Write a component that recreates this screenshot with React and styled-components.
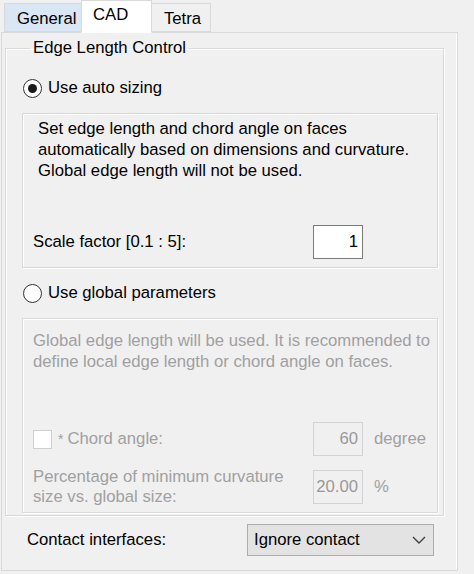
import styled, { createGlobalStyle } from 'styled-components';

const GlobalStyle = createGlobalStyle`
  html, body {
    margin: 0;
    padding: 0;
    background: #f0f0f0;
  }
  body {
    font-family: "Liberation Sans", Arial, sans-serif;
  }
`;

const Window = styled.div`
  width: 474px;
  height: 574px;
  background: #f0f0f0;
  color: #000;
  font-size: 16.7px;
  display: flex;
  flex-direction: column;
  overflow: hidden;
`;

const TabStrip = styled.div`
  display: flex;
  align-items: flex-end;
  height: 32px;
  padding-left: 5px;
  position: relative;
  z-index: 1;
`;

const Tab = styled.div`
  box-sizing: border-box;
  width: ${(p) => p.$width}px;
  height: ${(p) => (p.$active ? 33 : 29)}px;
  margin-bottom: ${(p) => (p.$active ? -1 : 0)}px;
  margin-left: -1px;
  padding: ${(p) => (p.$active ? '0 0 3px 11px' : '2px 0 0 12px')};
  display: flex;
  align-items: center;
  border: 1px solid #d9d9d9;
  border-bottom-color: ${(p) => (p.$active ? '#fff' : '#d9d9d9')};
  background: ${(p) => (p.$active ? '#fff' : p.$hover ? '#d9e6f3' : '#f0f0f0')};
  white-space: nowrap;
`;

const Pane = styled.div`
  box-sizing: border-box;
  height: 539px;
  margin: 0 16px 0 1px;
  padding: 5px 13px 0 3px;
  border: 1px solid #d9d9d9;
  box-shadow: inset -1px 0 0 #fff;
  display: flex;
  flex-direction: column;
`;

const Group = styled.fieldset`
  margin: 0;
  min-width: 0;
  padding: 18px 5px 2px 16px;
  border: 1px solid #d9d9d9;
  box-shadow: inset 1px 1px 0 #fff, 1px 1px 0 #fff;
  display: flex;
  flex-direction: column;
  gap: 13px;
`;

const Legend = styled.legend`
  margin-left: 8px;
  padding: 0 3px;
  line-height: 20px;
`;

const RadioRow = styled.label`
  display: flex;
  align-items: center;
  gap: 6px;
  height: 24px;
  padding-left: 1px;
`;

const Radio = styled.span`
  box-sizing: border-box;
  width: 19px;
  height: 19px;
  border: 1px solid #333;
  border-radius: 50%;
  background: #fff;
  display: flex;
  align-items: center;
  justify-content: center;

  &::after {
    content: "";
    display: ${(p) => (p.$checked ? 'block' : 'none')};
    width: 9px;
    height: 9px;
    border-radius: 50%;
    background: #1a1a1a;
  }
`;

const Panel = styled.div`
  box-sizing: border-box;
  height: ${(p) => p.$height}px;
  padding: ${(p) => p.$padding};
  border: 1px solid #d9d9d9;
  box-shadow: inset 1px 1px 0 #fff, 1px 1px 0 #fff;
  display: flex;
  flex-direction: column;
  color: ${(p) => (p.$disabled ? '#a0a0a0' : '#000')};
`;

const Note = styled.p`
  margin: 0;
  padding-left: ${(p) => p.$indent || 0}px;
  line-height: 21px;
`;

const FieldRow = styled.div`
  display: grid;
  grid-template-columns: 269px 50px auto;
  column-gap: 11px;
  align-items: center;
  margin-top: ${(p) => (p.$first ? 'auto' : '11px')};
  line-height: 20px;
`;

const NumBox = styled.div`
  box-sizing: border-box;
  height: 34px;
  padding-right: 4px;
  display: flex;
  align-items: center;
  justify-content: flex-end;
  background: ${(p) => (p.$disabled ? '#f0f0f0' : '#fff')};
  border: 1px solid ${(p) => (p.$disabled ? '#d2d2d2' : '#7a7a7a')};
  color: ${(p) => (p.$disabled ? '#999' : '#000')};
`;

const CheckLabel = styled.div`
  display: flex;
  align-items: center;
`;

const Check = styled.span`
  box-sizing: border-box;
  width: 19px;
  height: 19px;
  margin-right: 6px;
  background: #fff;
  border: 1px solid #cfcfcf;
`;

const Star = styled.span`
  font-size: 14px;
  align-self: flex-start;
  margin: 0 4px 0 0;
`;

const ContactRow = styled.div`
  display: grid;
  grid-template-columns: 220px 187px;
  align-items: center;
  margin-top: 8px;
  padding-left: 22px;
`;

const Select = styled.div`
  box-sizing: border-box;
  height: 32px;
  padding: 0 7px 0 6px;
  display: flex;
  align-items: center;
  justify-content: space-between;
  background: #e3e3e3;
  border: 1px solid #adadad;
`;

const Chevron = () => (
  <svg width="14" height="8" viewBox="0 0 14 8">
    <polyline points="1,1 7,7 13,1" fill="none" stroke="#404040" strokeWidth="1.4" />
  </svg>
);

export default function App() {
  return (
    <>
      <GlobalStyle />
      <Window>
        <TabStrip>
          <Tab $width={78} $hover>General</Tab>
          <Tab $width={71} $active>CAD</Tab>
          <Tab $width={60}>Tetra</Tab>
        </TabStrip>
        <Pane>
          <Group>
            <Legend>Edge Length Control</Legend>
            <RadioRow>
              <Radio $checked />
              Use auto sizing
            </RadioRow>
            <Panel $height={155} $padding="4px 0 8px 10px">
              <Note $indent={5}>
                Set edge length and chord angle on faces
                <br />
                automatically based on dimensions and curvature.
                <br />
                Global edge length will not be used.
              </Note>
              <FieldRow $first>
                <span>Scale factor [0.1 : 5]:</span>
                <NumBox>1</NumBox>
              </FieldRow>
            </Panel>
            <RadioRow>
              <Radio />
              Use global parameters
            </RadioRow>
            <Panel $height={195} $padding="11px 0 5px 10px" $disabled>
              <Note>
                Global edge length will be used. It is recommended to
                <br />
                define local edge length or chord angle on faces.
              </Note>
              <FieldRow $first>
                <CheckLabel>
                  <Check />
                  <Star>*</Star>
                  Chord angle:
                </CheckLabel>
                <NumBox $disabled>60</NumBox>
                <span>degree</span>
              </FieldRow>
              <FieldRow>
                <span>
                  Percentage of minimum curvature
                  <br />
                  size vs. global size:
                </span>
                <NumBox $disabled>20.00</NumBox>
                <span>%</span>
              </FieldRow>
            </Panel>
          </Group>
          <ContactRow>
            <span>Contact interfaces:</span>
            <Select>
              <span>Ignore contact</span>
              <Chevron />
            </Select>
          </ContactRow>
        </Pane>
      </Window>
    </>
  );
}
